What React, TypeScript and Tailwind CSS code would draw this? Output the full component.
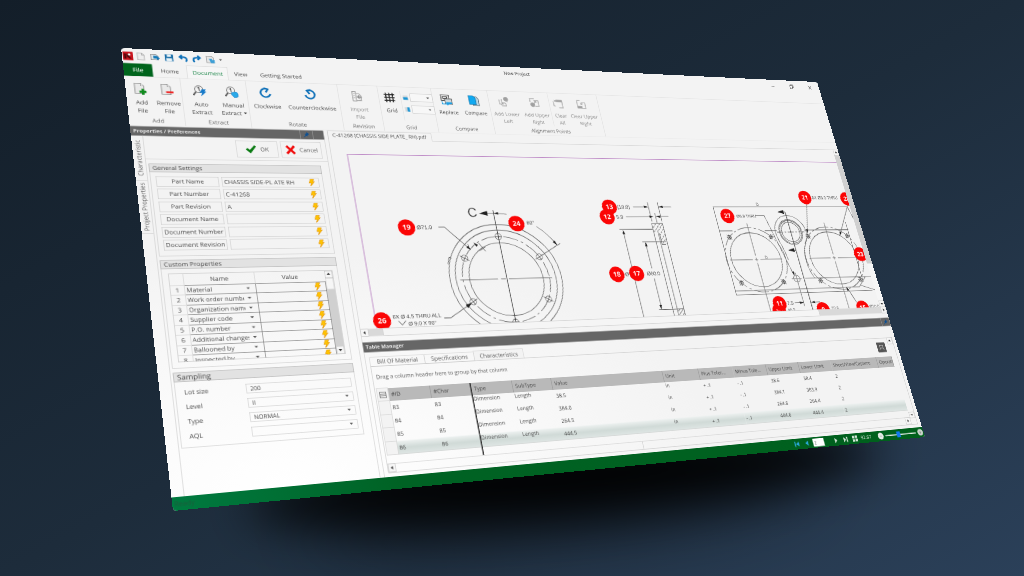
import { useEffect, useState } from 'react';
import type { ReactNode } from 'react';
import clsx from 'clsx';

// The application is laid out at 1920x1080 and drawn at half that size on the tilted surface
const SURFACE_W = 960;
const SURFACE_H = 540;

// Surface corners as fractions of the scene: TL, TR, BR, BL
const CORNERS = [
  [0.1182, 0.0833],
  [0.7979, 0.1424],
  [0.9033, 0.7587],
  [0.1689, 0.8872],
];

function tilt(sceneW: number, sceneH: number) {
  const [[x0, y0], [x1, y1], [x2, y2], [x3, y3]] = CORNERS.map(([x, y]) => [x * sceneW, y * sceneH]);
  const dx1 = x1 - x2, dx2 = x3 - x2, dx3 = x0 - x1 + x2 - x3;
  const dy1 = y1 - y2, dy2 = y3 - y2, dy3 = y0 - y1 + y2 - y3;
  const det = dx1 * dy2 - dx2 * dy1;
  const g = (dx3 * dy2 - dx2 * dy3) / det;
  const h = (dx1 * dy3 - dx3 * dy1) / det;
  const a = x1 - x0 + g * x1, b = x3 - x0 + h * x3;
  const d = y1 - y0 + g * y1, e = y3 - y0 + h * y3;
  return `matrix3d(${[
    a / SURFACE_W, d / SURFACE_W, 0, g / SURFACE_W,
    b / SURFACE_H, e / SURFACE_H, 0, h / SURFACE_H,
    0, 0, 1, 0,
    x0, y0, 0, 1,
  ].join(',')})`;
}

function useSceneSize() {
  const [size, setSize] = useState({ w: window.innerWidth, h: window.innerHeight });
  useEffect(() => {
    const onResize = () => setSize({ w: window.innerWidth, h: window.innerHeight });
    window.addEventListener('resize', onResize);
    return () => window.removeEventListener('resize', onResize);
  }, []);
  return size;
}

/* ---------- icons ---------- */

function Page({ fill = '#e9e9e9', stroke = '#8c8c8c' }: { fill?: string; stroke?: string }) {
  return (
    <>
      <path d="M4 2h14l7 7v21H4z" fill={fill} stroke={stroke} strokeWidth="1.8" />
      <path d="M18 2v7h7" fill="#fff" stroke={stroke} strokeWidth="1.4" />
    </>
  );
}

function Bolt() {
  return (
    <svg viewBox="0 0 16 20" className="h-5 w-4 shrink-0">
      <path d="M6 1h8l-3 6h4L5 19l2-8H2z" fill="#ffc400" stroke="#e08a00" strokeWidth="1" />
    </svg>
  );
}

function Caret({ className = '' }: { className?: string }) {
  return (
    <svg viewBox="0 0 8 5" className={clsx('h-[5px] w-2 shrink-0', className)}>
      <path d="M0 0h8L4 5z" fill="#555" />
    </svg>
  );
}

const icons: Record<string, ReactNode> = {
  addFile: <><Page /><path d="M19 17h6v5h5v6h-5v5h-6v-5h-5v-6h5z" fill="#0f8a1c" /></>,
  removeFile: <><Page /><path d="M14 21h17v5H14z" fill="#f01414" /></>,
  auto: <><Magnifier /><path d="M22 12h10l-4 6h5L19 32l3-10h-6z" fill="#1579c9" /></>,
  manual: <><Magnifier /><path d="M17 18c3-2 5 1 7-2 3-1 8 2 8 7v6l-4 3h-6l-6-8z" fill="#2aa9e8" stroke="#1579c9" /></>,
  cw: <path d="M22 5a12 12 0 1 0 6 13M13 1l10 4-6 9" fill="none" stroke="#0e70b8" strokeWidth="4.5" />,
  ccw: <path d="M10 5a12 12 0 1 1-6 13M19 1L9 5l6 9" fill="none" stroke="#0e70b8" strokeWidth="4.5" />,
  importFile: (
    <g fill="none" stroke="#8f8f8f" strokeWidth="2.4">
      <path d="M5 2h9v28H5zM14 8h8l5 6v14H14M8 8h3M8 14h3M8 20h3" />
      <path d="M29 18H18m5-5l-5 5 5 5" stroke="#777" strokeWidth="3" />
    </g>
  ),
  grid: <path d="M7 2v28M16 2v28M25 2v28M2 7h28M2 16h28M2 25h28" stroke="#2b2b2b" strokeWidth="3" fill="none" />,
  replace: (
    <>
      <path d="M2 2h22v17H2zM7 7h11v6H7z" fill="#eee" stroke="#555" strokeWidth="2.4" />
      <path d="M12 14h19v16H12z" fill="#cfd8dc" stroke="#666" strokeWidth="2" />
      <path d="M4 20v8h12v-4l7 6-7 5v-4H2V20zM14 24h16v5H14z" fill="#1ba0e6" />
    </>
  ),
  compare: (
    <>
      <path d="M14 4h11l6 7v20H14z" fill="#b9d7e6" stroke="#5c6d77" strokeWidth="2" />
      <path d="M4 1h12l7 7v20H4z" fill="#10a8f0" stroke="#1271a6" strokeWidth="1.6" />
    </>
  ),
  lowerLeft: (
    <g fill="none" stroke="#999" strokeWidth="2.4">
      <path d="M2 10v14h7M7 29h13v-9M25 17v-4M9 8v12h10" />
      <circle cx="22" cy="8" r="6" fill="#8b8b8b" />
      <path d="M6 27l6-6m0 4v-4H8" />
    </g>
  ),
  upperRight: (
    <g fill="none" stroke="#999" strokeWidth="2.4">
      <path d="M4 14V3h13M15 9h13v18H17" />
      <circle cx="10" cy="22" r="6" fill="#8b8b8b" />
      <path d="M14 18l7-7m0 5v-5h-5" />
    </g>
  ),
  clearAll: (
    <g fill="none" stroke="#999" strokeWidth="2.4">
      <path d="M3 9v15h5M11 9h18v20H17" />
      <path d="M13 5h16v5H13z" fill="#8b8b8b" />
      <path d="M6 5l6 6m0-6l-6 6" />
    </g>
  ),
  clearUpper: (
    <g fill="none" stroke="#999" strokeWidth="2.4">
      <path d="M4 4h10M4 4v16M16 10h12v18H14" />
      <path d="M4 22h13v6H4z" fill="#8b8b8b" />
      <path d="M14 12l6 6m0-6l-6 6" />
    </g>
  ),
};

function Magnifier() {
  return (
    <>
      <circle cx="15" cy="12" r="9.5" fill="#f2f2f2" stroke="#7b7b7b" strokeWidth="2" />
      <path d="M8 19L1 29" stroke="#555" strokeWidth="3.6" />
      <path d="M12 9l4-2v10" fill="none" stroke="#444" strokeWidth="2" />
    </>
  );
}

/* ---------- title bar and ribbon ---------- */

function TitleBar() {
  return (
    <header className="flex h-[39px] items-center pl-px">
      <svg viewBox="0 0 24 24" className="h-6 w-6">
        <path d="M1 1h22v22H1z" fill="#c8141e" />
        <path d="M4 19V6h4v13zm6 0V6h9l-5 6 5 7h-4l-4-5" fill="#3a0508" />
        <circle cx="15" cy="8" r="3" fill="#fff" />
      </svg>
      <div className="flex">
        {['New', 'Open', 'Save', 'Undo', 'Redo', 'Export'].map((name, i) => (
          <button key={name} aria-label={name} className="flex h-7 w-[31px] items-center justify-center">
            <svg viewBox="0 0 24 24" className="h-[22px] w-[22px]" fill="none">
              {i === 0 && <path d="M4 2h10l6 6v14H4zM14 2v6h6" stroke="#aaa" strokeWidth="1.6" fill="#eee" />}
              {i === 1 && <><path d="M2 4h12l6 6v10H2z" stroke="#888" strokeWidth="1.6" fill="#dde6ea" /><path d="M8 8h9l6 7-7 6V16H8z" fill="#1579b8" /></>}
              {i === 2 && <><path d="M2 2h20v20H2z" fill="#1c6fa8" /><path d="M7 2h10v7H7zM5 13h14v9H5z" fill="#e9f3f8" /></>}
              {i === 3 && <path d="M10 2L4 8l6 6M4 8h9c9 0 9 9 5 13" stroke="#0e70b8" strokeWidth="4.4" />}
              {i === 4 && <path d="M14 2l6 6-6 6M20 8h-9c-9 0-9 9-5 13" stroke="#0e70b8" strokeWidth="4.4" />}
              {i === 5 && <><path d="M2 2h13l5 5v14H2z" stroke="#999" strokeWidth="1.6" fill="#e6e6e6" /><path d="M8 9h8v4l6-1v10H12z" fill="#3d9fd6" /></>}
            </svg>
          </button>
        ))}
        <button aria-label="Customize toolbar" className="flex w-4 items-center justify-center"><Caret /></button>
      </div>
      <h1 className="flex-1 pr-4 text-center text-[13px] text-[#333]">New Project</h1>
      <div className="flex">
        {['M7 13h10', 'M7 9h8v9H7zM10 9V6h8v9h-3', 'M7 7l10 11M17 7L7 18'].map((d, i) => (
          <button key={d} aria-label={['Minimize', 'Restore', 'Close'][i]} className="flex w-16 justify-center">
            <svg viewBox="0 0 24 24" className="h-6 w-6"><path d={d} fill="none" stroke="#666" strokeWidth="2" /></svg>
          </button>
        ))}
      </div>
    </header>
  );
}

function RibbonTabs() {
  return (
    <nav className="flex h-[34px] items-stretch border-b border-[#dcdcdc] text-sm text-[#444]">
      <a href="#file" className="flex w-[63px] items-center justify-center bg-[#00641c] font-semibold text-white">File</a>
      <a href="#home" className="flex w-[76px] items-center justify-center">Home</a>
      <a href="#document" className="-mb-px flex w-[93px] items-center justify-center border border-b-0 border-[#d0d0d0] bg-[#f6f6f6] text-[#128040]">Document</a>
      <a href="#view" className="flex w-[58px] items-center justify-center">View</a>
      <a href="#start" className="flex items-center px-4">Getting Started</a>
    </nav>
  );
}

function RibbonButton({ icon, label, className, off }: { icon: string; label: string[]; className: string; off?: boolean }) {
  return (
    <button disabled={off} className={clsx('flex flex-col items-center whitespace-nowrap pt-4', off ? 'text-[#888]' : 'text-[#444]', className)}>
      <svg viewBox="0 0 34 34" className={clsx('h-8 w-8', off && 'opacity-80')}>{icons[icon]}</svg>
      <span className="mt-2 flex flex-col text-sm leading-[21px]">
        {label.map((line) => (
          <span key={line} className="flex items-center justify-center gap-1">
            {line}
            {icon === 'manual' && line === 'Extract' && <Caret />}
          </span>
        ))}
      </span>
    </button>
  );
}

function RibbonGroup({ name, className, children }: { name: string; className: string; children: ReactNode }) {
  return (
    <section className={clsx('flex flex-col border-r border-[#d6d6d6]', className)}>
      <div className="flex flex-1 items-start">{children}</div>
      <h2 className="pb-[2px] text-center text-sm leading-5 text-[#666]">{name}</h2>
    </section>
  );
}

function GridCombo({ label, d }: { label: string; d: string }) {
  return (
    <label className="flex items-center gap-[5px]">
      <svg viewBox="0 0 14 14" className="h-[14px] w-[14px]">
        <path d="M1 1h12v12H1z" fill="#cfd6da" />
        <path d={d} fill="#1c95d4" />
      </svg>
      <span className="relative flex">
        <select aria-label={label} className="h-[23px] w-[58px] appearance-none border border-[#bbb] bg-[#f7f7f7]"><option /></select>
        <Caret className="pointer-events-none absolute top-[9px] right-2" />
      </span>
    </label>
  );
}

function Ribbon() {
  return (
    <div className="flex h-[126px] border-b border-[#dcdcdc] pl-1">
      <RibbonGroup name="Add" className="w-[118px]">
        <RibbonButton icon="addFile" label={['Add', 'File']} className="w-[56px]" />
        <RibbonButton icon="removeFile" label={['Remove', 'File']} className="w-[60px]" />
      </RibbonGroup>
      <RibbonGroup name="Extract" className="w-[147px]">
        <RibbonButton icon="auto" label={['Auto', 'Extract']} className="w-20" />
        <RibbonButton icon="manual" label={['Manual', 'Extract']} className="w-16" />
      </RibbonGroup>
      <RibbonGroup name="Rotate" className="w-[218px]">
        <RibbonButton icon="cw" label={['Clockwise']} className="w-[88px]" />
        <RibbonButton icon="ccw" label={['Counterclockwise']} className="w-[124px]" />
      </RibbonGroup>
      <RibbonGroup name="Revision" className="w-[101px]">
        <RibbonButton icon="importFile" label={['Import', 'File']} className="w-[92px]" off />
      </RibbonGroup>
      <RibbonGroup name="Grid" className="w-[138px]">
        <RibbonButton icon="grid" label={['Grid']} className="w-[54px]" />
        <div className="mt-3 flex flex-col gap-[10px] border-l border-[#dcdcdc] pt-[6px] pb-5 pl-[5px]">
          <GridCombo label="Grid rows" d="M1 6h12v7H1z" />
          <GridCombo label="Grid columns" d="M7 1h6v12H7z" />
        </div>
      </RibbonGroup>
      <RibbonGroup name="Compare" className="w-[150px]">
        <RibbonButton icon="replace" label={['Replace']} className="w-[72px]" />
        <RibbonButton icon="compare" label={['Compare']} className="w-[72px]" />
      </RibbonGroup>
      <RibbonGroup name="Alignment Points" className="w-[310px]">
        <RibbonButton icon="lowerLeft" label={['Add Lower', 'Left']} className="w-[84px]" off />
        <RibbonButton icon="upperRight" label={['Add Upper', 'Right']} className="w-[84px] border-r border-[#dcdcdc]" off />
        <RibbonButton icon="clearAll" label={['Clear', 'All']} className="w-[50px]" off />
        <RibbonButton icon="clearUpper" label={['Clear Upper', 'Right']} className="w-[84px]" off />
      </RibbonGroup>
    </div>
  );
}

/* ---------- shared ---------- */

function DarkBar({ title, close }: { title: string; close?: boolean }) {
  return (
    <div className="flex h-6 items-center bg-[#666] pl-[6px] text-xs font-bold text-[#f2f2f2]">
      <h2 className="flex-1">{title}</h2>
      <button aria-label={`Pin ${title}`} className="flex h-6 w-[30px] items-center justify-center border-x border-[#aaa]">
        <svg viewBox="0 0 14 14" className="h-4 w-4"><path d="M8 1l5 5-3 1-2 4-2-2-4 4-1-1 4-4-2-2 4-2z" fill="#0b4f93" /></svg>
      </button>
      {close && <button aria-label={`Close ${title}`} className="h-6 w-[26px]" />}
    </div>
  );
}

function ArrowButton({ dir, className }: { dir: 'up' | 'down' | 'left' | 'right'; className?: string }) {
  const d = { up: 'M4 9h8L8 4z', down: 'M4 6h8l-4 5z', left: 'M10 4v8L5 8z', right: 'M6 4v8l5-4z' }[dir];
  return (
    <button aria-label={`Scroll ${dir}`} className={clsx('flex h-[18px] w-[18px] shrink-0 items-center justify-center border border-[#bbb] bg-[#f6f6f6]', className)}>
      <svg viewBox="0 0 16 16" className="h-4 w-4"><path d={d} fill="#333" /></svg>
    </button>
  );
}

function Group({ title, big, children }: { title: string; big?: boolean; children: ReactNode }) {
  return (
    <fieldset className="border border-[#c4c4c4] border-t-0">
      <h3 className={clsx('-mx-px h-[21px] border border-[#aaa] bg-[#e2e2e2] pl-[6px] leading-[18px] text-[#444]', big ? 'text-base' : 'text-sm')}>{title}</h3>
      {children}
    </fieldset>
  );
}

/* ---------- properties panel ---------- */

const general = [
  ['Part Name', 'CHASSIS SIDE-PL ATE RH'],
  ['Part Number', 'C-41268'],
  ['Part Revision', 'A'],
  ['Document Name', ''],
  ['Document Number', ''],
  ['Document Revision', ''],
];

const custom = ['Material', 'Work order number', 'Organization name', 'Supplier code', 'P.O. number', 'Additional changes', 'Ballooned by', 'Inspected by'];

const sampling = [
  { label: 'Lot size', value: '200', select: false },
  { label: 'Level', value: 'II', select: true },
  { label: 'Type', value: 'NORMAL', select: true },
  { label: 'AQL', value: '', select: true },
];

function GeneralSettings() {
  return (
    <Group title="General Settings">
      <div className="flex flex-col gap-[6px] px-[10px] pt-[10px] pb-3">
        {general.map(([label, value]) => {
          const id = label.toLowerCase().replace(' ', '-');
          return (
            <div key={label} className="flex h-[25px] gap-[6px] text-sm text-[#444]">
              <label htmlFor={id} className="w-[136px] border border-[#c4c4c4] text-center leading-[22px]">{label}</label>
              <div className="flex flex-1 items-center border border-[#c4c4c4] pr-2">
                <input id={id} defaultValue={value} className="h-full min-w-0 flex-1 bg-transparent pl-1 outline-none" />
                <button aria-label={`Link ${label}`}><Bolt /></button>
              </div>
            </div>
          );
        })}
      </div>
    </Group>
  );
}

function CustomProperties() {
  return (
    <Group title="Custom Properties">
      <div className="mx-3 mt-[11px] mb-3 flex h-[203px] border border-[#b8b8b8]">
        <div className="flex-1 overflow-hidden">
          <table className="w-full table-fixed border-collapse text-sm text-[#444]">
            <thead>
              <tr className="h-[26px]">
                <th className="w-[30px] border-r border-[#c8c8c8]" aria-label="Row" />
                <th className="w-[151px] border-r border-[#c8c8c8] font-normal">Name</th>
                <th className="font-normal">Value</th>
              </tr>
            </thead>
            <tbody>
              {custom.map((name, i) => (
                <tr key={name} className="h-[23px]">
                  <td className="border-t border-r border-[#c8c8c8] text-center leading-5">{i + 1}</td>
                  <td className="border border-[#555] p-0">
                    <div className="flex h-[22px] items-center gap-2 pr-3">
                      <select aria-label={`Property ${i + 1}`} className="h-[22px] min-w-0 flex-1 appearance-none bg-transparent pl-[3px]">
                        <option>{name}</option>
                      </select>
                      <Caret />
                    </div>
                  </td>
                  <td className="border border-[#555] p-0">
                    <div className="flex h-[22px] items-center pr-[11px]">
                      <input aria-label={`${name} value`} className="h-[22px] min-w-0 flex-1 bg-transparent outline-none" />
                      <Bolt />
                    </div>
                  </td>
                </tr>
              ))}
            </tbody>
          </table>
        </div>
        <div className="flex w-[18px] flex-col bg-[#d0d0d0]">
          <ArrowButton dir="up" />
          <div className="h-7 border border-[#ccc] bg-[#f6f6f6]" />
          <div className="flex-1" />
          <ArrowButton dir="down" />
        </div>
      </div>
    </Group>
  );
}

function Sampling() {
  return (
    <Group title="Sampling" big>
      <div className="flex flex-col gap-[11px] pt-3 pr-[10px] pb-[13px] pl-[17px] text-sm text-[#444]">
        {sampling.map(({ label, value, select }) => (
          <label key={label} className="flex h-[21px] items-center">
            <span className="w-[127px]">{label}</span>
            {select ? (
              <span className="relative flex flex-1">
                <select className="h-[21px] w-full appearance-none border border-[#c4c4c4] bg-transparent pl-2 text-[13px] leading-4"><option>{value}</option></select>
                <Caret className="pointer-events-none absolute top-[7px] right-[10px]" />
              </span>
            ) : (
              <input defaultValue={value} className="h-[21px] min-w-0 flex-1 border border-[#c4c4c4] bg-transparent pl-2 text-[13px]" />
            )}
          </label>
        ))}
      </div>
    </Group>
  );
}

function PropertiesPanel() {
  return (
    <aside className="flex w-[435px] flex-col">
      <DarkBar title="Properties / Preferences" close />
      <div className="flex flex-1">
        <div className="flex w-6 flex-col text-sm text-[#555]">
          <button className="flex h-28 items-center justify-center border-b border-[#c4c4c4]"><span className="rotate-180 [writing-mode:vertical-rl]">Characteristic</span></button>
          <button className="flex h-[129px] items-center justify-center border-b border-[#c4c4c4]"><span className="rotate-180 [writing-mode:vertical-rl]">Project Properties</span></button>
          <div className="flex-1" />
        </div>
        <div className="flex flex-1 flex-col border-x border-[#c4c4c4]">
          <div className="flex h-[58px] items-center justify-end gap-2 border-b border-[#ccc] pr-[10px] text-sm text-[#555]">
            <button className="flex h-[43px] w-[95px] items-center justify-center gap-2 border border-[#c8c8c8]">
              <svg viewBox="0 0 26 26" className="h-[26px] w-[26px]"><path d="M1 14l4-4 5 5L21 3l4 3-14 18z" fill="#0a7a12" /></svg>
              OK
            </button>
            <button className="flex h-[43px] w-[95px] items-center justify-center gap-2 border border-[#c8c8c8]">
              <svg viewBox="0 0 26 26" className="h-[26px] w-[26px]"><path d="M2 5l4-4 7 8 7-8 4 4-7 8 7 8-4 4-7-8-7 8-4-4 7-8z" fill="#f00a0a" /></svg>
              Cancel
            </button>
          </div>
          <div className="flex flex-col gap-[10px] pt-3 pr-[18px] pl-[6px]">
            <GeneralSettings />
            <CustomProperties />
            <Sampling />
          </div>
        </div>
      </div>
    </aside>
  );
}

/* ---------- drawing ---------- */

// cx, cy, number
const balloons: [number, number, string][] = [
  [597, 455, '19'], [499, 688, '26'], [879, 447, '24'],
  [1145, 402, '13'], [1132, 430, '12'], [1121, 589, '18'], [1177, 588, '17'],
  [1490, 429, '27'], [1756, 374, '21'], [1896, 378, '28'], [1886, 548, '23'],
  [1571, 705, '10'], [1578, 684, '11'], [1711, 706, '9'], [1841, 706, '15'],
];

// Solid arrow head with its tip at x, y; angle in degrees, 0 points right
function Head({ x, y, a, size = 12 }: { x: number; y: number; a: number; size?: number }) {
  return <path d={`M0 0L${-size} ${size * 0.3}V${-size * 0.3}z`} transform={`translate(${x} ${y}) rotate(${a})`} fill="#222" stroke="none" />;
}

function Flange() {
  const holes = [0, 60, 120, 180, 240, 300].map((deg) => {
    const t = (deg * Math.PI) / 180;
    return [824 + 112 * Math.sin(t), 593 - 112 * Math.cos(t), deg];
  });
  return (
    <g>
      <circle cx="824" cy="593" r="144" />
      <circle cx="824" cy="593" r="129" />
      <circle cx="824" cy="593" r="95" />
      <circle cx="824" cy="593" r="112" strokeDasharray="38 8 6 8" />
      {holes.map(([x, y, deg]) => (
        <g key={deg} transform={`translate(${x} ${y}) rotate(${deg})`}>
          <circle r="8" />
          <path d="M0-13V13M-8 0H8" />
        </g>
      ))}
      <path d="M824 410V707" stroke="#444" strokeWidth="1.8" />
      <path d="M705 593h96m8 0h12m8 0h114" />
      <path d="M824 419A174 174 0 0 1 858 422M930 455A174 174 0 0 1 975 506M930 532L984 502M793 419H824" />
      <path d="M676 455h15L745 514M745 514l-4-14M770 498l14 22M768 518l18-10M682 552l6-18 6 2" />
      <path d="M648 687h16L723 652" />
      <Head x={786} y={419} a={180} size={22} />
      <Head x={824} y={419} a={180} />
      <Head x={975} y={506} a={55} />
      <Head x={747} y={516} a={48} />
      <Head x={757} y={496} a={230} />
      <Head x={723} y={652} a={-31} size={16} />
      <path d="M537 690l8 10 10-10" />
    </g>
  );
}

function Section() {
  return (
    <g>
      <path d="M1255 450h32v58h-16v-30M1255 450V707M1287 508V707M1268 470V707" />
      <path d="M1257 462l10-12M1257 474l22-24M1270 470l16-18M1270 484l17-20M1272 496l15-16M1274 506l13-14" strokeDasharray="6 3" />
      <path d="M1268 688h19M1270 704l16-16M1270 694l6-6M1280 706l7-8" />
      <path d="M1258 388v56M1287 388v56M1272 420v28M1213 402h42M1287 402h38M1186 430h70M1274 430h36" />
      <path d="M1158 466h96M1168 470v104M1168 604v103M1215 501h70M1224 505v70M1224 602v82M1216 688h60" />
      <Head x={1257} y={402} a={0} />
      <Head x={1288} y={402} a={180} />
      <Head x={1266} y={430} a={0} />
      <Head x={1273} y={430} a={180} />
      <Head x={1168} y={467} a={-90} />
      <Head x={1224} y={502} a={-90} />
      <Head x={1223} y={687} a={90} />
    </g>
  );
}

function PlateHole({ cx }: { cx: number }) {
  return (
    <g transform={`translate(${cx} 557)`}>
      <circle r="78" />
      <circle r="93" strokeDasharray="46 7 7 7" />
      <path d="M0-106V-10M0-5V5M0 10V150M-82 0h70m7 0h10m7 0h68" />
      {[45, 135, 225, 315].map((a) => (
        <g key={a} transform={`rotate(${a}) translate(93 0)`}>
          <path d="M-5-5h10v10h-10zM-5-5l10 10M5-5l-10 10M-10 0h20" stroke="#555" strokeWidth="1.2" />
        </g>
      ))}
    </g>
  );
}

function Plate() {
  return (
    <g>
      <path d="M1453 402H1890M1453 402V656H1890M1453 645H1700M1700 645h150l30-30M1453 473h40M1595 473h38M1722 473H1870M1680 615H1899M1890 402l20 80M1868 450v180M1855 640l44 15" />
      <PlateHole cx={1544} />
      <PlateHole cx={1795} />
      <circle cx="1677" cy="478" r="29" />
      <circle cx="1677" cy="478" r="34" />
      <circle cx="1677" cy="478" r="37" />
      <path d="M1628 486A50 50 0 1 1 1727 486C1727 504 1700 520 1700 560S1708 600 1712 615M1628 486C1628 500 1640 520 1644 560" />
      <path d="M1632 478h92" strokeDasharray="20 5 5 5" />
      <path d="M1677 418V707" stroke="#333" strokeWidth="1.8" />
      <circle cx="1654" cy="615" r="10" />
      <path d="M1654 598V694M1638 615h32M1579 429h27L1648 605" />
      <path d="M1655 418h22M1655 532h22" stroke="#222" />
      <path d="M1756 394L1730 482M1893 398L1836 490M1808 645l18 45M1626 684h28M1679 684h28" />
      <Head x={1652} y={418} a={180} size={20} />
      <Head x={1652} y={532} a={180} size={20} />
      <Head x={1730} y={482} a={106} />
      <Head x={1836} y={490} a={120} />
      <Head x={1650} y={606} a={78} />
      <Head x={1806} y={643} a={-110} />
      <Head x={1654} y={684} a={0} />
      <Head x={1678} y={684} a={180} />
    </g>
  );
}

function Drawing() {
  return (
    <svg viewBox="445 223 1454 484" preserveAspectRatio="xMinYMin slice" className="h-[484px] min-w-0 flex-1" role="img" aria-label="Part drawing">
      <path d="M484 707V263H1900" fill="none" stroke="#c08fc8" strokeWidth="2" />
      <g fill="none" stroke="#666" strokeWidth="1.6">
        <Flange />
        <Section />
        <Plate />
      </g>
      <g fill="#444" fontSize="14" fontFamily="Liberation Sans, sans-serif">
        <text x="757" y="428" fontSize="34">C</text>
        <text x="622" y="460">Ø71.0</text>
        <text x="906" y="450">60°</text>
        <text x="525" y="684" fontSize="13">6X Ø 4.5 THRU ALL</text>
        <text x="560" y="702" fontSize="13">Ø 9.0 X 90°</text>
        <text x="1167" y="407">(10.0)</text>
        <text x="1158" y="435">5.0</text>
        <text x="1144" y="594">Ø</text>
        <text x="1206" y="594">Ø60.0</text>
        <text x="1518" y="434" fontSize="12">Ø6.8 THRU</text>
        <text x="1779" y="379" fontSize="13">6X Ø3.3 THRU</text>
        <text x="1590" y="399" fontSize="12">D</text>
        <text x="1572" y="555" fontSize="12">D</text>
        <text x="1602" y="689">7.5</text>
        <text x="1598" y="708" fontSize="12">40.2</text>
        <text x="1738" y="708" fontSize="12">23.6</text>
        <text x="1864" y="707" fontSize="12">Ø10.0</text>
      </g>
      {balloons.map(([x, y, n]) => (
        <g key={n}>
          <circle cx={x} cy={y} r="21" fill="#fb0505" />
          <text x={x} y={y + 6} textAnchor="middle" fill="#fff" fontSize="18" fontWeight="700" fontFamily="Open Sans, sans-serif">{n}</text>
        </g>
      ))}
    </svg>
  );
}

function Viewer() {
  return (
    <section className="flex flex-col">
      <div className="flex h-[22px]">
        <h2 className="w-[258px] border-x border-t border-[#c8c8c8] pl-[10px] text-[13px] leading-[20px] whitespace-nowrap text-[#444]">C-41268 (CHASSIS SIDE PLATE_ RH).pdf</h2>
        <div className="flex-1 border-b border-[#c4c4c4]" />
      </div>
      <div className="flex">
        <Drawing />
        <div className="flex w-[18px] flex-col bg-[#d0d0d0]">
          <ArrowButton dir="up" />
          <div className="flex-1" />
          <div className="h-28 bg-[#f6f6f6]" />
          <ArrowButton dir="down" />
        </div>
      </div>
      <div className="flex h-[18px] bg-[#d9d9d9]">
        <ArrowButton dir="left" />
        <div className="w-[34px]" />
        <div className="w-[1200px] border border-[#c4c4c4] bg-[#f5f5f5]" />
        <div className="flex-1" />
        <ArrowButton dir="right" />
      </div>
    </section>
  );
}

/* ---------- table manager ---------- */

const columns = [
  { name: '#ID', width: 'w-[99px]' },
  { name: '#Char', width: 'w-[97px]' },
  { name: 'Type', width: 'w-[103px]' },
  { name: 'SubType', width: 'w-[100px]' },
  { name: 'Value', width: '' },
  { name: 'Unit', width: 'w-[102px]' },
  { name: 'Plus Toler...', width: 'w-[99px]' },
  { name: 'Minus Tole...', width: 'w-[101px]' },
  { name: 'Upper Limit', width: 'w-[100px]' },
  { name: 'Lower Limit', width: 'w-[101px]' },
  { name: 'Sheet/View/Capture', width: 'w-[151px]' },
  { name: 'Operation', width: 'w-[52px]' },
];

const rows = [
  ['83', '83', 'Dimension', 'Length', '38.5', 'in', '+ .1', '- .1', '38.6', '38.4', '2', ''],
  ['84', '84', 'Dimension', 'Length', '384.0', 'in', '+ .1', '- .1', '384.1', '383.9', '2', ''],
  ['85', '85', 'Dimension', 'Length', '264.5', 'in', '+ .1', '- .1', '264.6', '264.4', '2', ''],
  ['86', '86', 'Dimension', 'Length', '444.5', 'in', '+ .1', '- .1', '444.6', '444.4', '2', ''],
];

// Text columns sit at the top of the row, numbers in the middle
const topAligned = ['Type', 'SubType', 'Unit'];

function DataTable() {
  return (
    <table className="w-full table-fixed border-collapse text-[13px] text-[#444]">
      <thead>
        <tr className="h-[30px] bg-[#b9b9b9] text-left">
          <th className="w-[25px] border border-[#c8c8c8] bg-[#f3f3f3]" aria-label="Row">
            <svg viewBox="0 0 14 14" className="mx-auto h-4 w-4"><path d="M1 1h12v12H1zM1 5h12M1 9h12" fill="none" stroke="#777" strokeWidth="1.5" /></svg>
          </th>
          {columns.map((c) => (
            <th key={c.name} className={clsx('overflow-hidden border-r p-0 pl-[6px] font-normal whitespace-nowrap', c.width, c.name === '#Char' ? 'border-r-[3px] border-[#333]' : 'border-[#8d8d8d]')}>{c.name}</th>
          ))}
        </tr>
      </thead>
      <tbody>
        {rows.map((row, i) => (
          <tr key={row[0]} className={clsx('h-[31px]', i === 3 && 'bg-linear-to-b from-[#edf1f0] via-[#d0dad7] to-[#dfe6e4]')}>
            <td className="border border-[#c8c8c8] bg-[#f3f3f3]" />
            {row.map((cell, j) => {
              const top = topAligned.includes(columns[j].name);
              return (
                <td key={columns[j].name} className={clsx('p-0 leading-4', top ? 'align-top' : 'pl-1 align-middle', j === 1 && 'border-r-[3px] border-[#333]')}>{cell}</td>
              );
            })}
          </tr>
        ))}
        <tr className="h-[18px] border-t border-[#d0d0d0]">
          <td colSpan={2} />
          <td className="border-r-[3px] border-[#333]" />
          <td colSpan={10} />
        </tr>
      </tbody>
    </table>
  );
}

function TableManager() {
  return (
    <section className="flex flex-1 flex-col">
      <DarkBar title="Table Manager" />
      <div className="flex flex-1 flex-col px-[10px] pt-[9px] pb-[9px]">
        <div className="flex h-6 items-end text-sm text-[#555]">
          <button className="-mb-px h-[22px] w-[128px] border border-[#ccc] leading-5">Bill Of Material</button>
          <button className="-mb-px h-[22px] w-[120px] border border-[#ccc] leading-5">Specifications</button>
          <button className="-mb-px h-6 w-[124px] border border-b-0 border-[#ccc] bg-[#f3f3f3] leading-5">Characteristics</button>
        </div>
        <div className="flex flex-1 border border-[#bbb]">
          <div className="flex min-w-0 flex-1 flex-col pl-[3px]">
            <div className="flex h-[52px] items-center justify-between pr-[10px] pl-1 text-[13px] text-[#555]">
              Drag a column header here to group by that column
              <button aria-label="Filter" className="flex h-7 w-7 items-center justify-center bg-[#555]">
                <svg viewBox="0 0 20 20" className="h-5 w-5"><path d="M5 4h10v8H5zM3 17l3-5h8l3 5" fill="none" stroke="#bbb" strokeWidth="1.6" /></svg>
              </button>
            </div>
            <DataTable />
            <div className="flex-1" />
            <div className="-ml-[3px] flex h-5 border-t border-[#c8c8c8]">
              <ArrowButton dir="left" />
              <div className="w-[612px] border-r border-[#bbb]" />
              <div className="flex-1" />
              <ArrowButton dir="right" />
            </div>
          </div>
          <div className="flex w-[19px] flex-col justify-between pb-4">
            <ArrowButton dir="up" />
            <ArrowButton dir="down" />
          </div>
        </div>
      </div>
    </section>
  );
}

/* ---------- status bar ---------- */

function StatusIcon({ name, d, color = '#d6e6da' }: { name: string; d: string; color?: string }) {
  return (
    <button aria-label={name} className="flex w-[30px] justify-center">
      <svg viewBox="0 0 16 16" className="h-[18px] w-[18px]"><path d={d} fill={color} /></svg>
    </button>
  );
}

function StatusBar() {
  return (
    <footer className="flex h-7 items-center rounded-b-lg bg-linear-to-r from-[#007a40] via-[#006224] via-25% to-[#00601c] text-[13px] text-white">
      <span className="flex-1 pl-1 text-sm text-[#1d5a3c]">Ready</span>
      <StatusIcon name="First page" d="M2 2h3v12H2zM14 2v12L6 8z" color="#29a8d8" />
      <StatusIcon name="Previous page" d="M12 2v12L4 8z" color="#29a8d8" />
      <input aria-label="Page" defaultValue="2" className="mr-[22px] ml-1 h-[21px] w-[34px] bg-white pl-1 text-xs text-[#555]" />
      <StatusIcon name="Next page" d="M5 2l7 6-7 6z" />
      <StatusIcon name="Last page" d="M3 2l7 6-7 6zM11 2h3v12h-3z" />
      <StatusIcon name="Fit page" d="M1 1h6v6H1zM9 1h6v6H9zM1 9h6v6H1zM9 9h6v6H9z" />
      <span className="mr-[22px] ml-1">92.67</span>
      <button aria-label="Zoom out" className="h-[18px] w-[18px] rounded-full bg-[#e4ece6] text-sm leading-4 text-[#777]">−</button>
      <input
        type="range"
        aria-label="Zoom"
        defaultValue={42}
        className="mx-[6px] h-[3px] w-[100px] appearance-none bg-[#e4ece6] [&::-webkit-slider-thumb]:h-4 [&::-webkit-slider-thumb]:w-3 [&::-webkit-slider-thumb]:appearance-none [&::-webkit-slider-thumb]:bg-[#1279f0]"
      />
      <button aria-label="Zoom in" className="mr-[2px] h-[18px] w-[18px] rounded-full bg-[#c9d3cb] text-sm leading-4 text-[#555]">+</button>
    </footer>
  );
}

export default function App() {
  const { w, h } = useSceneSize();

  return (
    <main className="relative min-h-screen overflow-hidden bg-linear-to-br from-[#131e29] via-[#1d2c3b] to-[#2b4059] font-['Open_Sans',sans-serif]">
      <div className="absolute top-[77%] left-[24%] h-[12%] w-[62%] -rotate-5 rounded-[50%] bg-black blur-xl" />
      <div className="absolute top-[79%] left-[30%] h-[13%] w-[50%] -rotate-6 rounded-[50%] bg-black/60 blur-2xl" />
      <div
        className="absolute top-0 left-0 origin-top-left overflow-hidden rounded"
        style={{ width: SURFACE_W, height: SURFACE_H, transform: tilt(w, h) }}
      >
        <div className="flex h-[200%] w-[200%] origin-top-left scale-50 flex-col bg-[#f3f3f3]">
          <TitleBar />
          <RibbonTabs />
          <Ribbon />
          <div className="flex flex-1 gap-[9px] bg-radial-[at_12%_100%] from-white to-[#f3f3f3] to-45% pt-[2px]">
            <PropertiesPanel />
            <div className="flex min-w-0 flex-1 flex-col gap-[14px] border-l border-[#c4c4c4]">
              <Viewer />
              <TableManager />
            </div>
          </div>
          <StatusBar />
        </div>
      </div>
    </main>
  );
}
